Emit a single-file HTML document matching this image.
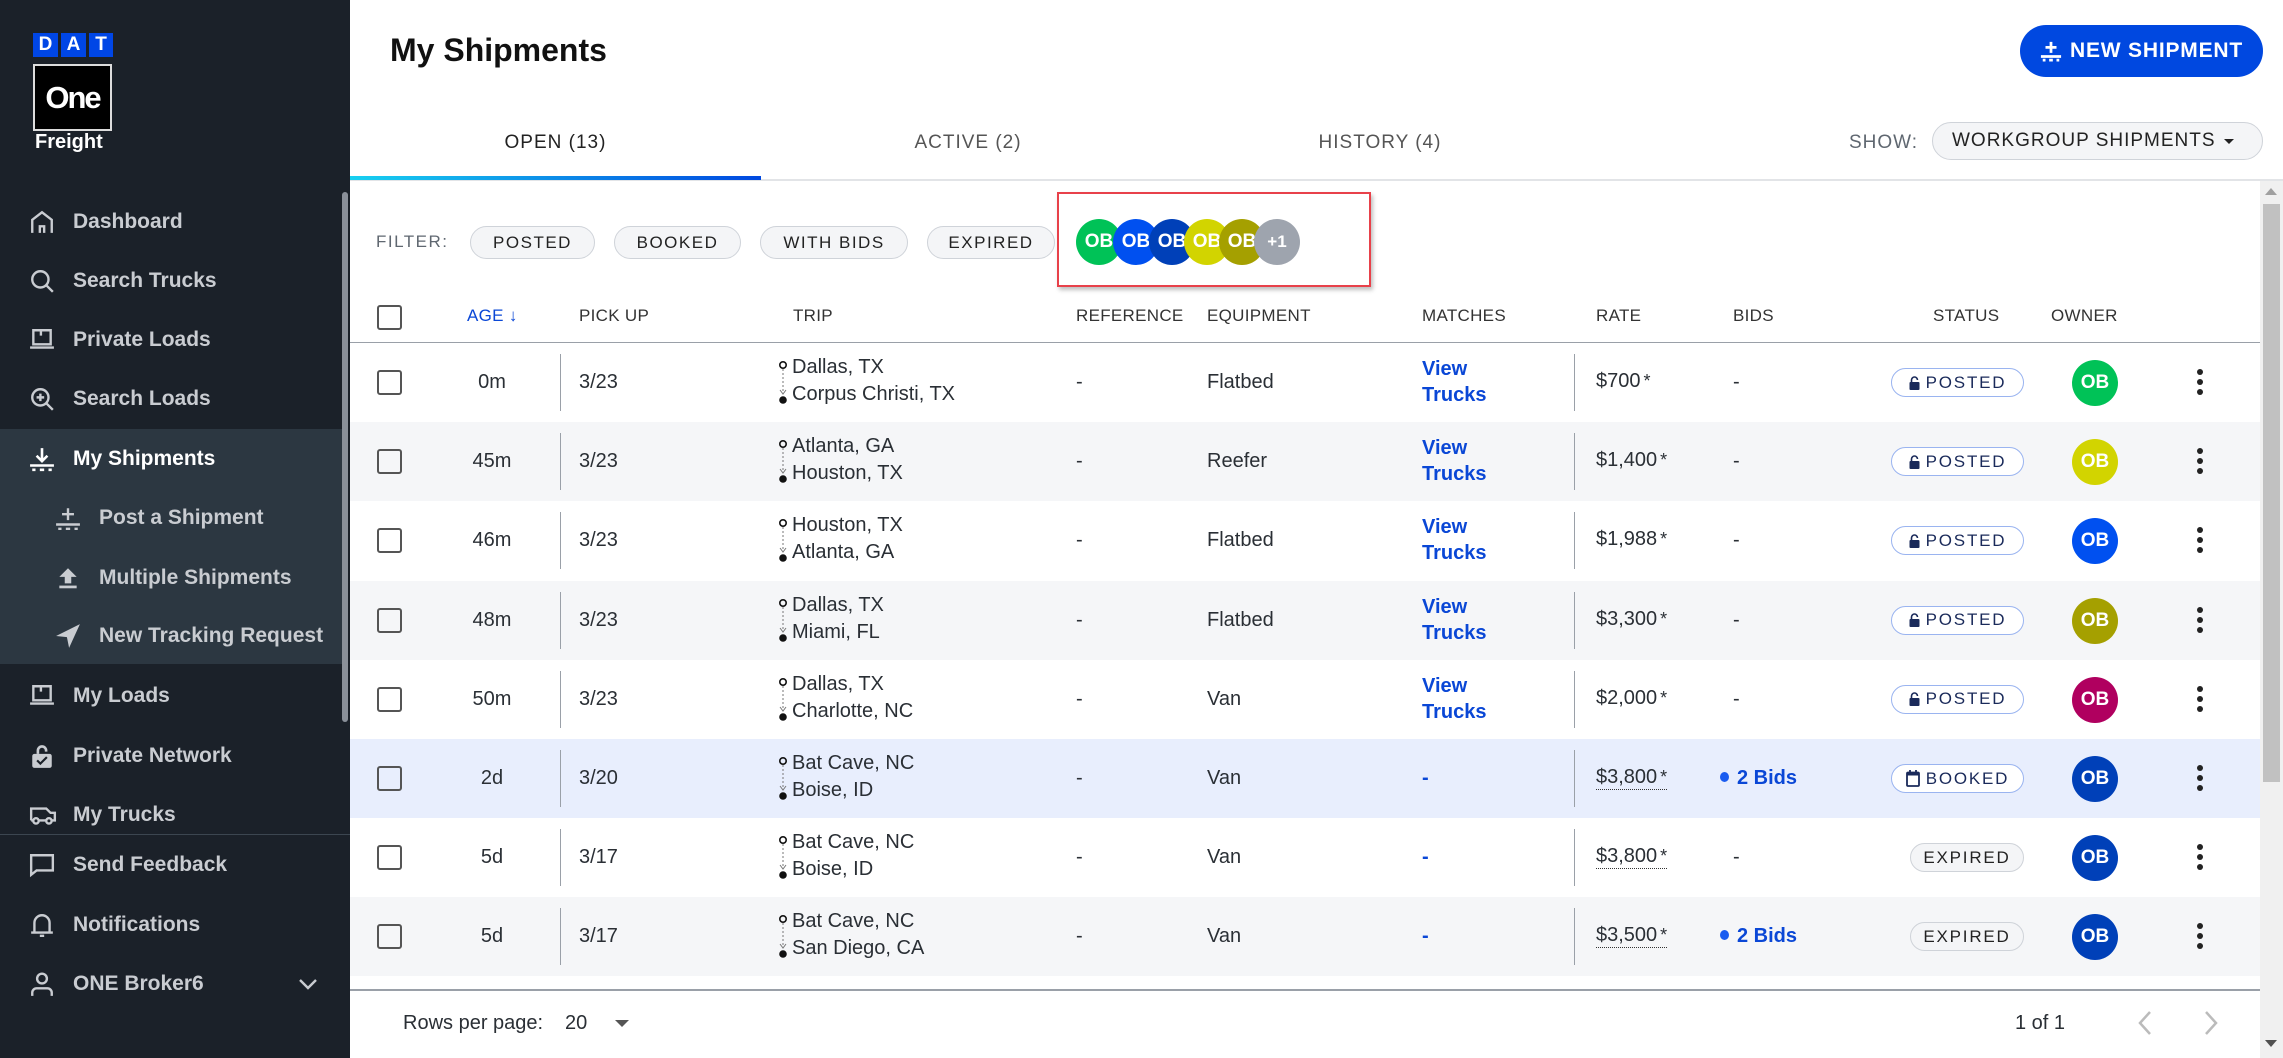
<!DOCTYPE html>
<html><head><meta charset="utf-8">
<style>
*{box-sizing:border-box;margin:0;padding:0}
body{width:2283px;height:1058px;overflow:hidden;background:#fff;font-family:"Liberation Sans",sans-serif;position:relative;color:#1d2329}
.a{position:absolute}
#sb{left:0;top:0;width:350px;height:1058px;background:#1b2129}
.nav{position:absolute;left:0;width:340px;height:59px;display:flex;align-items:center;color:#c9ccd1;font-weight:bold;font-size:21px}
.nav svg{position:absolute;left:29px}
.nav span{position:absolute;left:73px}
.sub svg{left:55px}.sub span{left:99px}
.chip{position:absolute;top:226px;height:33px;border:1.5px solid #cfd3d9;background:#f4f5f7;border-radius:17px;font-size:17px;letter-spacing:1.5px;color:#222;display:flex;align-items:center;justify-content:center}
.av{position:absolute;width:46px;height:46px;border-radius:50%;color:#fff;font-weight:bold;font-size:19px;display:flex;align-items:center;justify-content:center}
.th{position:absolute;top:306px;font-size:17px;color:#333;letter-spacing:.3px}
.row{position:absolute;left:350px;width:1910px;height:79px}
.c{position:absolute;font-size:20px;color:#2a2f35}
.cb{position:absolute;left:27px;top:27px;width:25px;height:25px;border:2.5px solid #555;border-radius:3px}
.sep{position:absolute;width:1px;background:#9aa0a8;top:11px;height:57px}
.link{color:#0a47d6;font-weight:bold;font-size:20px;line-height:26px}
.pill{position:absolute;height:29px;border-radius:15px;font-size:17px;letter-spacing:1.8px;display:flex;align-items:center;justify-content:center;gap:6px}
.pb{border:1.5px solid #9ab4f0;background:#fff;color:#1a2a5a}
.pe{border:1.5px solid #cfd3d9;background:#f4f5f7;color:#222}
.keb{position:absolute;left:1847px;top:26px;width:6px}
.keb i{display:block;width:6px;height:6px;border-radius:50%;background:#222;margin-bottom:4px}
</style></head><body>
<div id="sb" class="a">
 <div class="a" style="left:33px;top:33px;display:flex;gap:3px">
  <div style="width:25px;height:24px;background:#0046e6;color:#fff;font-weight:bold;font-size:19px;text-align:center;line-height:24px">D</div>
  <div style="width:25px;height:24px;background:#0046e6;color:#fff;font-weight:bold;font-size:19px;text-align:center;line-height:24px">A</div>
  <div style="width:24px;height:24px;background:#0046e6;color:#fff;font-weight:bold;font-size:19px;text-align:center;line-height:24px">T</div>
 </div>
 <div class="a" style="left:33px;top:64px;width:79px;height:67px;background:#000;border:2px solid #ddd;color:#fff;font-weight:bold;font-size:31px;letter-spacing:-2px;text-align:center;line-height:63px">One</div>
 <div class="a" style="left:35px;top:131px;color:#fff;font-weight:bold;font-size:20px">Freight</div>
 <div class="a" style="left:0;top:429px;width:343px;height:235px;background:#2c3741"></div>
 <div class="a" style="left:342px;top:192px;width:6px;height:530px;background:#8a9099;border-radius:3px"></div>
 <div class="a" style="left:0;top:834px;width:350px;height:1px;background:#3c4650"></div>

 <div class="nav" style="top:192px"><svg width="26" height="26" viewBox="0 0 24 24" fill="none" stroke="#c9ccd1" stroke-width="2.2"><path d="M3 22V10l9-7 9 7v12M10 22v-6h4v6"/></svg><span>Dashboard</span></div>
 <div class="nav" style="top:251px"><svg width="26" height="26" viewBox="0 0 24 24" fill="none" stroke="#c9ccd1" stroke-width="2.2"><circle cx="10.5" cy="10.5" r="7.5"/><path d="M16 16l6 6"/></svg><span>Search Trucks</span></div>
 <div class="nav" style="top:310px"><svg width="26" height="26" viewBox="0 0 24 24" fill="none" stroke="#c9ccd1" stroke-width="2.2"><path d="M4 3h16v13H4zM11 4v4M1 19h22"/></svg><span>Private Loads</span></div>
 <div class="nav" style="top:369px"><svg width="26" height="26" viewBox="0 0 24 24" fill="none" stroke="#c9ccd1" stroke-width="2.2"><circle cx="10.5" cy="10.5" r="7.5"/><path d="M16 16l6 6M10.5 7v7M7 10.5h7"/></svg><span>Search Loads</span></div>
 <div class="nav" style="top:429px;color:#fff"><svg width="26" height="26" viewBox="0 0 24 24" fill="none" stroke="#fff" stroke-width="2.4"><path d="M12 2v12M7 9l5 5 5-5M1 18h22M3 22h3M10 22h4M18 22h3"/></svg><span>My Shipments</span></div>
 <div class="nav sub" style="top:488px"><svg width="26" height="26" viewBox="0 0 24 24" fill="none" stroke="#c9ccd1" stroke-width="2.2"><path d="M12 3v11M6.5 8.5h11M1 18h22M3 22h3M10 22h4M18 22h3"/></svg><span>Post a Shipment</span></div>
 <div class="nav sub" style="top:548px"><svg width="26" height="26" viewBox="0 0 24 24" fill="#c9ccd1"><path d="M12 3l-8 8h5v6h6v-6h5z"/><rect x="4" y="19" width="16" height="2.5"/></svg><span>Multiple Shipments</span></div>
 <div class="nav sub" style="top:606px"><svg width="26" height="26" viewBox="0 0 24 24" fill="#c9ccd1"><path d="M23 1L1 12l10 1 2 10z"/></svg><span>New Tracking Request</span></div>
 <div class="nav" style="top:666px"><svg width="26" height="26" viewBox="0 0 24 24" fill="none" stroke="#c9ccd1" stroke-width="2.2"><path d="M4 3h16v13H4zM11 4v4M1 19h22"/></svg><span>My Loads</span></div>
 <div class="nav" style="top:726px"><svg width="26" height="26" viewBox="0 0 24 24" fill="#c9ccd1"><path d="M7 10V7a5 5 0 0110 0v1h-2.4V7a2.6 2.6 0 00-5.2 0v3z"/><rect x="3" y="10" width="18" height="13" rx="2"/><path d="M7.5 16l3 3 6-6" stroke="#1b2129" stroke-width="2" fill="none"/></svg><span>Private Network</span></div>
 <div class="nav" style="top:785px"><svg width="28" height="26" viewBox="0 0 26 24" fill="none" stroke="#c9ccd1" stroke-width="2.2"><path d="M2 17V6h14l4 4h4v7h-3M9 17h8M2 17h2"/><circle cx="6.5" cy="17.5" r="2.5"/><circle cx="18.5" cy="17.5" r="2.5"/></svg><span>My Trucks</span></div>
 <div class="nav" style="top:835px"><svg width="26" height="26" viewBox="0 0 24 24" fill="none" stroke="#c9ccd1" stroke-width="2.2"><path d="M2 3h20v14H7l-5 4z"/></svg><span>Send Feedback</span></div>
 <div class="nav" style="top:895px"><svg width="26" height="26" viewBox="0 0 24 24" fill="none" stroke="#c9ccd1" stroke-width="2.2"><path d="M5 18V10a7 7 0 0114 0v8M2 19h20M12 2v1M10 22h4"/></svg><span>Notifications</span></div>
 <div class="nav" style="top:954px"><svg width="26" height="26" viewBox="0 0 24 24" fill="none" stroke="#c9ccd1" stroke-width="2.2"><circle cx="12" cy="7" r="4.5"/><path d="M3 23v-3a4 4 0 014-4h10a4 4 0 014 4v3"/></svg><span>ONE Broker6</span><svg style="left:298px" width="20" height="14" viewBox="0 0 20 14" fill="none" stroke="#c9ccd1" stroke-width="2.4"><path d="M2 3l8 8 8-8"/></svg></div>
</div>

<div class="a" style="left:390px;top:32px;font-size:32px;font-weight:bold;color:#111">My Shipments</div>
<div class="a" style="left:2020px;top:25px;width:243px;height:52px;border-radius:26px;background:#0048e0;color:#fff;font-size:21px;font-weight:bold;letter-spacing:.8px;display:flex;align-items:center;justify-content:center;gap:8px"><svg width="22" height="22" viewBox="0 0 24 24" fill="none" stroke="#fff" stroke-width="3"><path d="M12 2v12M6 8h12M1 18h22M3 22h3M10 22h4M18 22h3"/></svg>NEW SHIPMENT</div>

<div class="a" style="left:350px;top:132px;width:411px;text-align:center;font-size:19px;letter-spacing:1px;color:#222">OPEN (13)</div>
<div class="a" style="left:820px;top:132px;width:296px;text-align:center;font-size:19px;letter-spacing:1px;color:#555">ACTIVE (2)</div>
<div class="a" style="left:1232px;top:132px;width:296px;text-align:center;font-size:19px;letter-spacing:1px;color:#555">HISTORY (4)</div>
<div class="a" style="left:350px;top:179px;width:1933px;height:2px;background:#e2e4e7"></div>
<div class="a" style="left:350px;top:176px;width:411px;height:4px;background:linear-gradient(90deg,#18d0f0,#0048e0)"></div>
<div class="a" style="left:1849px;top:132px;font-size:19px;letter-spacing:1px;color:#5f6770">SHOW:</div>
<div class="a" style="left:1932px;top:122px;width:331px;height:38px;border:1.5px solid #cfd3d9;background:#f4f5f7;border-radius:19px;font-size:19px;letter-spacing:1px;color:#222;display:flex;align-items:center;padding-left:19px">WORKGROUP SHIPMENTS <span style="margin-left:8px;border:5px solid transparent;border-top-color:#222;margin-top:6px"></span></div>

<div class="a" style="left:2260px;top:181px;width:23px;height:877px;background:#f0f0f0"></div>
<div class="a" style="left:2263px;top:204px;width:17px;height:578px;background:#c1c1c1"></div>
<div class="a" style="left:2265px;top:188px;border:6px solid transparent;border-bottom:7px solid #a0a0a0;border-top:0"></div>
<div class="a" style="left:2265px;top:1040px;border:6px solid transparent;border-top:7px solid #505050;border-bottom:0"></div>

<div class="a" style="left:376px;top:232px;font-size:17px;letter-spacing:1.5px;color:#5f6770">FILTER:</div>
<div class="chip" style="left:470px;width:125px">POSTED</div>
<div class="chip" style="left:614px;width:127px">BOOKED</div>
<div class="chip" style="left:760px;width:148px">WITH BIDS</div>
<div class="chip" style="left:927px;width:128px">EXPIRED</div>
<div class="a" style="left:1057px;top:192px;width:314px;height:95px;border:2.5px solid #e8414a;box-shadow:2px 3px 4px rgba(0,0,0,.25)"></div>
<div class="av" style="left:1076px;top:219px;background:#00c257">OB</div>
<div class="av" style="left:1113px;top:219px;background:#0050f0">OB</div>
<div class="av" style="left:1149px;top:219px;background:#0040b8">OB</div>
<div class="av" style="left:1184px;top:219px;background:#d2d400">OB</div>
<div class="av" style="left:1219px;top:219px;background:#a5a000">OB</div>
<div class="av" style="left:1254px;top:219px;background:#9ea4ae;font-size:17px">+1</div>

<div class="a" style="left:377px;top:305px;width:25px;height:25px;border:2.5px solid #555;border-radius:3px"></div>
<div class="th" style="left:467px;color:#0a47d6">AGE <span style="font-weight:bold">&#8595;</span></div>
<div class="th" style="left:579px">PICK UP</div>
<div class="th" style="left:793px">TRIP</div>
<div class="th" style="left:1076px">REFERENCE</div>
<div class="th" style="left:1207px">EQUIPMENT</div>
<div class="th" style="left:1422px">MATCHES</div>
<div class="th" style="left:1596px">RATE</div>
<div class="th" style="left:1733px">BIDS</div>
<div class="th" style="left:1933px">STATUS</div>
<div class="th" style="left:2051px">OWNER</div>
<div class="a" style="left:350px;top:342px;width:1910px;height:2px;background:#9aa0a8"></div>

<div id="rows"></div>
<script>
var R=[["0m","3/23","Dallas, TX","Corpus Christi, TX","Flatbed",1,"$700*","-","P","#00c257"],
["45m","3/23","Atlanta, GA","Houston, TX","Reefer",1,"$1,400*","-","P","#d2d400"],
["46m","3/23","Houston, TX","Atlanta, GA","Flatbed",1,"$1,988*","-","P","#0050f0"],
["48m","3/23","Dallas, TX","Miami, FL","Flatbed",1,"$3,300*","-","P","#a5a000"],
["50m","3/23","Dallas, TX","Charlotte, NC","Van",1,"$2,000*","-","P","#b0005f"],
["2d","3/20","Bat Cave, NC","Boise, ID","Van",0,"$3,800*","2","B","#0040b8"],
["5d","3/17","Bat Cave, NC","Boise, ID","Van",0,"$3,800*","-","E","#0040b8"],
["5d","3/17","Bat Cave, NC","San Diego, CA","Van",0,"$3,500*","2","E","#0040b8"]];
var h="";
R.forEach(function(r,i){
 var bg=i==5?"#e8eefd":(i%2?"#f5f6f8":"#fff");
 var top=343+i*79.2;
 h+='<div class="row" style="top:'+top+'px;background:'+bg+'">';
 h+='<div class="cb"></div>';
 h+='<div class="c" style="left:92px;width:100px;text-align:center;top:28px">'+r[0]+'</div>';
 h+='<div class="sep" style="left:210px"></div>';
 h+='<div class="c" style="left:229px;top:28px">'+r[1]+'</div>';
 h+='<svg class="a" style="left:428px;top:17px" width="10" height="46" viewBox="0 0 10 46"><circle cx="5" cy="5" r="3.2" fill="none" stroke="#111" stroke-width="1.6"/><path d="M5 9v24" stroke="#777" stroke-width="1" stroke-dasharray="2 2"/><path d="M2 30l3 4 3-4" stroke="#777" fill="none" stroke-width="1"/><circle cx="5" cy="40" r="3.8" fill="#111"/></svg>';
 h+='<div class="c" style="left:442px;top:11px;line-height:27px">'+r[2]+'<br>'+r[3]+'</div>';
 h+='<div class="c" style="left:726px;top:28px">-</div>';
 h+='<div class="c" style="left:857px;top:28px">'+r[4]+'</div>';
 h+=r[5]?'<div class="c link" style="left:1072px;top:13px">View<br>Trucks</div>':'<div class="c link" style="left:1072px;top:26px">-</div>';
 h+='<div class="sep" style="left:1224px"></div>';
 var u=i>=5?'border-bottom:1.5px dotted #333;':'';
 h+='<div class="c" style="left:1246px;top:27px;'+u+'">'+r[6].replace("*","<span style=\'font-size:18px;margin-left:3px\'>*</span>")+'</div>';
 h+=r[7]=="2"?'<div class="c link" style="left:1370px;top:26px"><span style="display:inline-block;width:9px;height:10px;border-radius:50%;background:#1a5cf0;margin-right:8px;vertical-align:2px"></span>2 Bids</div>':'<div class="c" style="left:1383px;top:28px">-</div>';
 if(r[8]=="P")h+='<div class="pill pb" style="left:1541px;top:25px;width:133px"><svg width="11" height="14" viewBox="0 0 11 14"><path d="M2.5 6V4a3 3 0 016 0" stroke="#1a2a5a" stroke-width="1.6" fill="none"/><rect x="0.5" y="6" width="10" height="8" rx="1" fill="#1a2a5a"/></svg>POSTED</div>';
 if(r[8]=="B")h+='<div class="pill pb" style="left:1541px;top:25px;width:133px"><svg width="14" height="17" viewBox="0 0 14 17"><rect x="1" y="2.5" width="12" height="13.5" rx="1" fill="none" stroke="#1a2a5a" stroke-width="1.8"/><rect x="1" y="2.5" width="12" height="3" fill="#1a2a5a"/><path d="M4 0v4M10 0v4" stroke="#1a2a5a" stroke-width="1.8"/></svg>BOOKED</div>';
 if(r[8]=="E")h+='<div class="pill pe" style="left:1560px;top:25px;width:114px">EXPIRED</div>';
 h+='<div class="av" style="left:1722px;top:17px;background:'+r[9]+'">OB</div>';
 h+='<div class="keb"><i></i><i></i><i></i></div>';
 h+='</div>';
});
document.getElementById("rows").innerHTML=h;
</script>
<div class="a" style="left:350px;top:989px;width:1910px;height:2px;background:#9aa0a8"></div>
<div class="a" style="left:403px;top:1012px;font-size:20px;color:#2a2f35">Rows per page:</div>
<div class="a" style="left:565px;top:1012px;font-size:20px;color:#2a2f35">20</div>
<div class="a" style="left:615px;top:1020px;border:7px solid transparent;border-top:7px solid #555"></div>
<div class="a" style="left:2015px;top:1012px;font-size:20px;color:#2a2f35">1 of 1</div>
<svg class="a" style="left:2137px;top:1010px" width="16" height="26" viewBox="0 0 16 26" fill="none" stroke="#bbb" stroke-width="2.5"><path d="M13 2L3 13l10 11"/></svg>
<svg class="a" style="left:2203px;top:1010px" width="16" height="26" viewBox="0 0 16 26" fill="none" stroke="#bbb" stroke-width="2.5"><path d="M3 2l10 11L3 24"/></svg>
</body></html>
